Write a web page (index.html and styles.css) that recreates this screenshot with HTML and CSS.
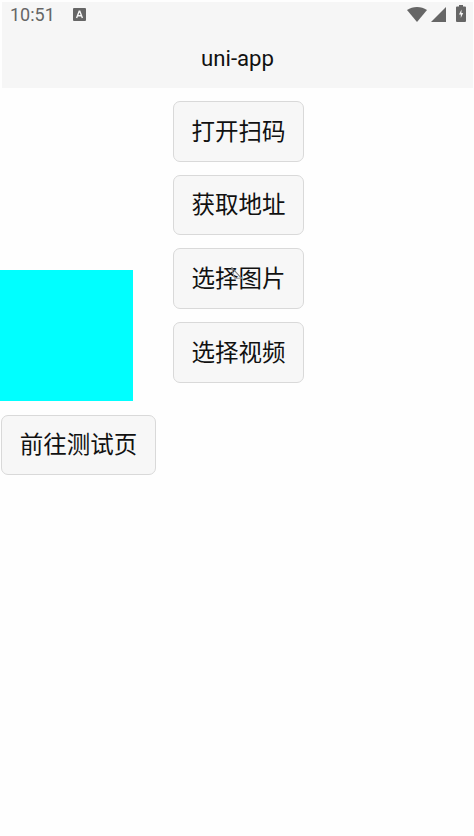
FILE: index.html
```html
<!DOCTYPE html>
<html lang="zh">
<head>
<meta charset="utf-8">
<title>uni-app</title>
<link rel="stylesheet" href="styles.css">
</head>
<body>
<div class="app">
  <header class="top">
    <div class="status">
      <span class="time">10:51</span>
      <svg class="badge" width="13" height="13" viewBox="0 0 13 13"><rect width="13" height="13" rx="1" fill="#666"/><path d="M3.600 10 6.200 3.200h.6L9.400 10M4.600 7.800h3.800" fill="none" stroke="#f6f6f6" stroke-width="1.400"/></svg>
      <span class="spacer"></span>
      <svg class="wifi" width="20" height="15" viewBox="0 0 20 15"><path d="M0 3C3 1 6.300 0 10 0s7 1 10 3L10 15z" fill="#666"/></svg>
      <svg class="signal" width="15" height="15" viewBox="0 0 15 15"><path d="M15 0V15H0z" fill="#666"/></svg>
      <svg class="battery" width="10" height="17" viewBox="0 0 10 17"><path d="M3 0h4v1.500h2a1 1 0 0 1 1 1V16a1 1 0 0 1-1 1H1a1 1 0 0 1-1-1V2.500a1 1 0 0 1 1-1h2z" fill="#666"/><path d="M5.500 4.500 3 9.500h1.800v3.500l2.400-5H5.400z" fill="#f6f6f6"/></svg>
    </div>
    <div class="nav">uni-app</div>
  </header>
  <main class="content">
    <div class="row-center"><button class="btn">打开扫码</button></div>
    <div class="row-center"><button class="btn">获取地址</button></div>
    <div class="media">
      <div class="cyan"></div>
      <div class="media-buttons">
        <button class="btn">选择图片</button>
        <button class="btn">选择视频</button>
      </div>
      <div class="pointer"><span class="edge edge-a"></span><span class="edge edge-b"></span><span class="edge edge-c"></span></div>
    </div>
    <button class="btn btn-wide">前往测试页</button>
  </main>
</div>
</body>
</html>
```
FILE: styles.css
```css
* { box-sizing: border-box; }
html, body { margin: 0; padding: 0; }
body { width: 474px; height: 836px; overflow: hidden; background: #fefefe; font-family: Roboto, "Noto Sans CJK SC", sans-serif; }
.app { display: flex; flex-direction: column; height: 836px; }
.top { height: 86px; margin: 2px 1px 0 2px; background: #f6f6f6; }
.status { display: flex; align-items: center; height: 25px; padding: 0 7px 0 8px; color: #666; }
.time { font-size: 18px; width: 63px; flex-shrink: 0; }
.badge { flex-shrink: 0; }
.spacer { flex: 1; }
.wifi { flex-shrink: 0; margin-right: 4px; }
.signal { flex-shrink: 0; margin-right: 10px; }
.battery { flex-shrink: 0; margin-top: -2px; }
.nav { height: 61px; display: flex; align-items: center; justify-content: center; font-size: 22.200px; color: #111; }
.content { display: flex; flex-direction: column; padding-top: 13px; }
.row-center { display: flex; justify-content: center; padding-left: 3px; margin-bottom: 13px; }
.btn { width: 131.500px; height: 60.670px; padding: 0 0 3.500px; border: 1px solid #d9d9d9; border-radius: 7px; background: #f7f7f7; color: #111; font-family: "Noto Sans CJK SC", sans-serif; font-size: 23.500px; }
.media { position: relative; display: flex; justify-content: center; padding-left: 3px; }
.cyan { position: absolute; left: 0; top: 21.500px; width: 133px; height: 131px; background: #00ffff; }
.media-buttons { display: flex; flex-direction: column; gap: 13px; }
.pointer { position: absolute; z-index: 5; left: 231px; top: 19px; width: 14px; height: 18px; }
.edge { position: absolute; left: 1px; top: 0; height: 1px; background: #777; transform-origin: 0 0; }
.edge-a { width: 15px; transform: rotate(48deg); }
.edge-b { width: 12px; transform: rotate(75deg); background: #999; }
.edge-c { left: 4px; top: 11px; width: 7px; transform: rotate(-5deg); background: #999; }
.btn-wide { width: 155px; margin: 32px 0 0 1px; }
```
